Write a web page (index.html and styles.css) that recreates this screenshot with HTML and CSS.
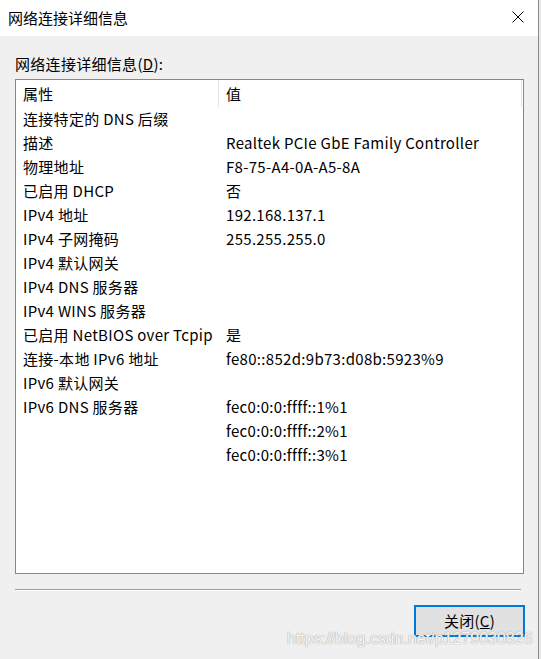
FILE: index.html
```html
<!DOCTYPE html>
<html lang="zh-CN">
<head>
<meta charset="utf-8">
<title>网络连接详细信息</title>
<link rel="stylesheet" href="styles.css">
</head>
<body>
<div class="window">
  <div class="titlebar">
    <span class="title">网络连接详细信息</span>
    <svg class="close" width="12" height="12" viewBox="0 0 12 12"><path d="M0.5 0.5 L11.5 11.5 M11.5 0.5 L0.5 11.5" stroke="#000" stroke-width="1" fill="none"/></svg>
  </div>
  <div class="content">
    <div class="label">网络连接详细信息(<u>D</u>):</div>
    <div class="listbox">
      <div class="header">
        <div class="col1">属性</div>
        <div class="col2">值</div>
        <div class="hend"></div>
      </div>
      <div class="row"><div class="col1">连接特定的 DNS 后缀</div><div class="col2"></div></div>
      <div class="row"><div class="col1">描述</div><div class="col2">Realtek PCIe GbE Family Controller</div></div>
      <div class="row"><div class="col1">物理地址</div><div class="col2">F8-75-A4-0A-A5-8A</div></div>
      <div class="row"><div class="col1">已启用 DHCP</div><div class="col2">否</div></div>
      <div class="row"><div class="col1">IPv4 地址</div><div class="col2">192.168.137.1</div></div>
      <div class="row"><div class="col1">IPv4 子网掩码</div><div class="col2">255.255.255.0</div></div>
      <div class="row"><div class="col1">IPv4 默认网关</div><div class="col2"></div></div>
      <div class="row"><div class="col1">IPv4 DNS 服务器</div><div class="col2"></div></div>
      <div class="row"><div class="col1">IPv4 WINS 服务器</div><div class="col2"></div></div>
      <div class="row"><div class="col1">已启用 NetBIOS over Tcpip</div><div class="col2">是</div></div>
      <div class="row"><div class="col1">连接-本地 IPv6 地址</div><div class="col2">fe80::852d:9b73:d08b:5923%9</div></div>
      <div class="row"><div class="col1">IPv6 默认网关</div><div class="col2"></div></div>
      <div class="row"><div class="col1">IPv6 DNS 服务器</div><div class="col2">fec0:0:0:ffff::1%1</div></div>
      <div class="row"><div class="col1"></div><div class="col2">fec0:0:0:ffff::2%1</div></div>
      <div class="row"><div class="col1"></div><div class="col2">fec0:0:0:ffff::3%1</div></div>
    </div>
    <div class="separator"></div>
    <div class="footer">
      <button class="btn">关闭(<u>C</u>)</button>
    </div>
  </div>
  <div class="watermark">https://blog.csdn.net/p1279030826</div>
</div>
</body>
</html>
```
FILE: styles.css
```css
* { box-sizing: border-box; }
html, body { margin: 0; padding: 0; }
body {
  width: 541px;
  height: 659px;
  background: #e8e8e8;
  font-family: "Noto Sans CJK SC", "Noto Sans", sans-serif;
  font-size: 15px;
  color: #000;
  overflow: hidden;
}
.window {
  position: relative;
  width: 539px;
  height: 659px;
  background: #f0f0f0;
  border-right: 1px solid #8a8a8a;
  display: flex;
  flex-direction: column;
}
.titlebar {
  height: 36px;
  background: #fff;
  display: flex;
  align-items: center;
  justify-content: space-between;
  padding: 0 14px 0 8px;
}
.title { line-height: 20px; }
.close { display: block; margin-top: -2px; }
.content {
  padding-left: 15px;
  width: 525px;
}
.label {
  margin-top: 18px;
  line-height: 20px;
  height: 20px;
  letter-spacing: 0.3px;
}
.listbox {
  margin-top: 5px;
  width: 509px;
  height: 495px;
  border: 1px solid #828790;
  background: #fff;
  letter-spacing: 0.3px;
}
.header, .row {
  display: flex;
  white-space: nowrap;
}
.header { height: 27px; line-height: 27px; }
.row { height: 24px; line-height: 24px; }
.col1 {
  width: 203px;
  padding-left: 7px;
}
.col2 {
  flex: 1;
  padding-left: 7px;
}
.header .col1 { border-right: 1px solid #e5e5e5; height: 27px; }
.header .col2 { flex: 1; }
.hend { width: 1px; height: 27px; background: #e5e5e5; margin-right: 1px; }
.separator {
  margin-top: 15px;
  width: 506px;
  border-top: 1px solid #a0a0a0;
  border-bottom: 1px solid #fff;
}
.footer {
  display: flex;
  justify-content: flex-end;
  margin-top: 14px;
}
.btn {
  width: 111px;
  height: 32px;
  border: 2px solid #0078d7;
  background: #e1e1e1;
  font-family: "Noto Sans CJK SC", "Noto Sans", sans-serif;
  font-size: 15px;
  color: #000;
  padding: 0;
  line-height: 26px;
  letter-spacing: 0.3px;
}
.watermark {
  position: absolute;
  left: 287px;
  top: 630px;
  font-family: "Liberation Sans", Arial, sans-serif;
  font-size: 16px;
  line-height: 18px;
  color: rgba(255, 255, 255, 0.92);
  text-shadow: 0 0 1px #9a9a9a, 0 0 1px #b0b0b0;
  white-space: nowrap;
}
```
